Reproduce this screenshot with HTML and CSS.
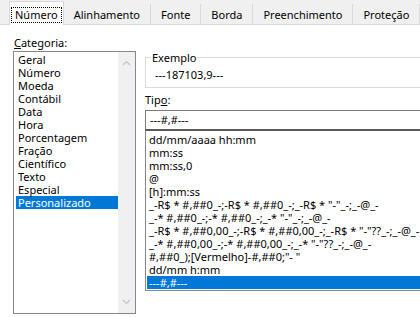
FILE: index.html
```html
<!DOCTYPE html>
<html lang="pt-BR">
<head>
    <meta charset="UTF-8">
    <title>Formatar Células</title>
    <link rel="stylesheet" href="styles.css">
</head>
<body>
    <div class="tabs">
        <div class="tab active"><span class="focus">Número</span></div>
        <div class="tab">Alinhamento</div>
        <div class="tab">Fonte</div>
        <div class="tab">Borda</div>
        <div class="tab">Preenchimento</div>
        <div class="tab">Proteção</div>
    </div>

    <div class="content">
        <div class="left-col">
            <div class="label"><u>C</u>ategoria:</div>
            <div class="listbox">
                <ul class="items">
                    <li>Geral</li>
                    <li>Número</li>
                    <li>Moeda</li>
                    <li>Contábil</li>
                    <li>Data</li>
                    <li>Hora</li>
                    <li>Porcentagem</li>
                    <li>Fração</li>
                    <li>Científico</li>
                    <li>Texto</li>
                    <li>Especial</li>
                    <li class="selected">Personalizado</li>
                </ul>
                <div class="scrollbar">
                    <svg class="arrow" width="9" height="6" viewBox="0 0 9 6"><path d="M1 5 L4.5 1.5 L8 5" fill="none" stroke="#c4c4c4" stroke-width="1.2"/></svg>
                    <svg class="arrow" width="9" height="6" viewBox="0 0 9 6"><path d="M1 1 L4.5 4.5 L8 1" fill="none" stroke="#c4c4c4" stroke-width="1.2"/></svg>
                </div>
            </div>
        </div>

        <div class="right-col">
            <fieldset class="sample">
                <legend>Exemplo</legend>
                <div class="sample-text">---187103,9---</div>
            </fieldset>

            <div class="label tipo-label">Tip<u>o</u>:</div>
            <div class="type-input">---#,#---</div>
            <ul class="type-list">
                <li>dd/mm/aaaa hh:mm</li>
                <li>mm:ss</li>
                <li>mm:ss,0</li>
                <li>@</li>
                <li>[h]:mm:ss</li>
                <li>_-R$ * #,##0_-;-R$ * #,##0_-;_-R$ * "-"_-;_-@_-</li>
                <li>_-* #,##0_-;-* #,##0_-;_-* "-"_-;_-@_-</li>
                <li>_-R$ * #,##0,00_-;-R$ * #,##0,00_-;_-R$ * "-"??_-;_-@_-</li>
                <li>_-* #,##0,00_-;-* #,##0,00_-;_-* "-"??_-;_-@_-</li>
                <li>#,##0_);[Vermelho]-#,##0;"- "</li>
                <li>dd/mm h:mm</li>
                <li class="selected">---#,#---</li>
            </ul>
        </div>
    </div>
</body>
</html>
```

FILE: styles.css
```css
body {
    margin: 0;
    width: 420px;
    height: 317px;
    overflow: hidden;
    background-color: #fff;
    font-family: "Noto Sans", sans-serif;
    font-size: 11px;
    line-height: 13px;
    color: #000;
}
.tabs {
    display: flex;
    height: 25px;
    box-sizing: border-box;
    padding-left: 9px;
    background-color: #f0f0f0;
    border-bottom: 1px solid #d9d9d9;
    align-items: flex-end;
}
.tab {
    height: 21px;
    box-sizing: border-box;
    padding: 4px 10px 0 10px;
    border-right: 1px solid #d9d9d9;
    margin-bottom: -1px;
    border-bottom: 1px solid #d9d9d9;
}
.tab.active {
    height: 24px;
    padding: 6px 2px 0 2px;
    background-color: #fff;
    border: 1px solid #d9d9d9;
    border-bottom: none;
}
.focus {
    display: inline-block;
    padding: 0 3px 1px 3px;
    outline: 1px dotted #000;
}
.content {
    display: flex;
    gap: 9px;
    padding: 11px 0 0 13px;
}
.label {
    padding-left: 1px;
    height: 13px;
}
.left-col {
    flex: none;
    width: 123px;
}
.listbox {
    display: flex;
    margin-top: 2px;
    height: 261px;
    border: 1px solid #828790;
}
.items {
    list-style: none;
    margin: 0;
    padding: 1px 0 0 2px;
    flex: 1;
}
.items li {
    padding-left: 2px;
    height: 13px;
    white-space: nowrap;
}
.selected {
    background-color: #0078d7;
    color: #fff;
}
.scrollbar {
    width: 17px;
    background-color: #f0f0f0;
    display: flex;
    flex-direction: column;
    justify-content: space-between;
    align-items: center;
    padding: 8px 0 8px 0;
}
.arrow {
    display: block;
}
.right-col {
    flex: none;
    width: 300px;
    padding-top: 15px;
}
.sample {
    margin: 0;
    padding: 0 0 6px 0;
    border: 1px solid #dcdcdc;
}
.sample legend {
    margin-left: 5px;
    padding: 0 1px;
    line-height: 13px;
}
.sample-text {
    margin: 4px 0 0 9px;
}
.tipo-label {
    padding-left: 0;
    margin-top: 5px;
}
.type-input {
    margin-top: 4px;
    height: 18px;
    line-height: 18px;
    padding-left: 4px;
    border: 1px solid #7a7a7a;
    border-bottom-color: #5a5a5a;
}
.type-list {
    list-style: none;
    margin: 0;
    padding: 2px 0 1px 1px;
    border: 1px solid #828790;
    border-top-color: #5a5a5a;
    overflow: hidden;
}
.type-list li {
    padding-left: 2px;
    height: 13px;
    white-space: nowrap;
}
```
